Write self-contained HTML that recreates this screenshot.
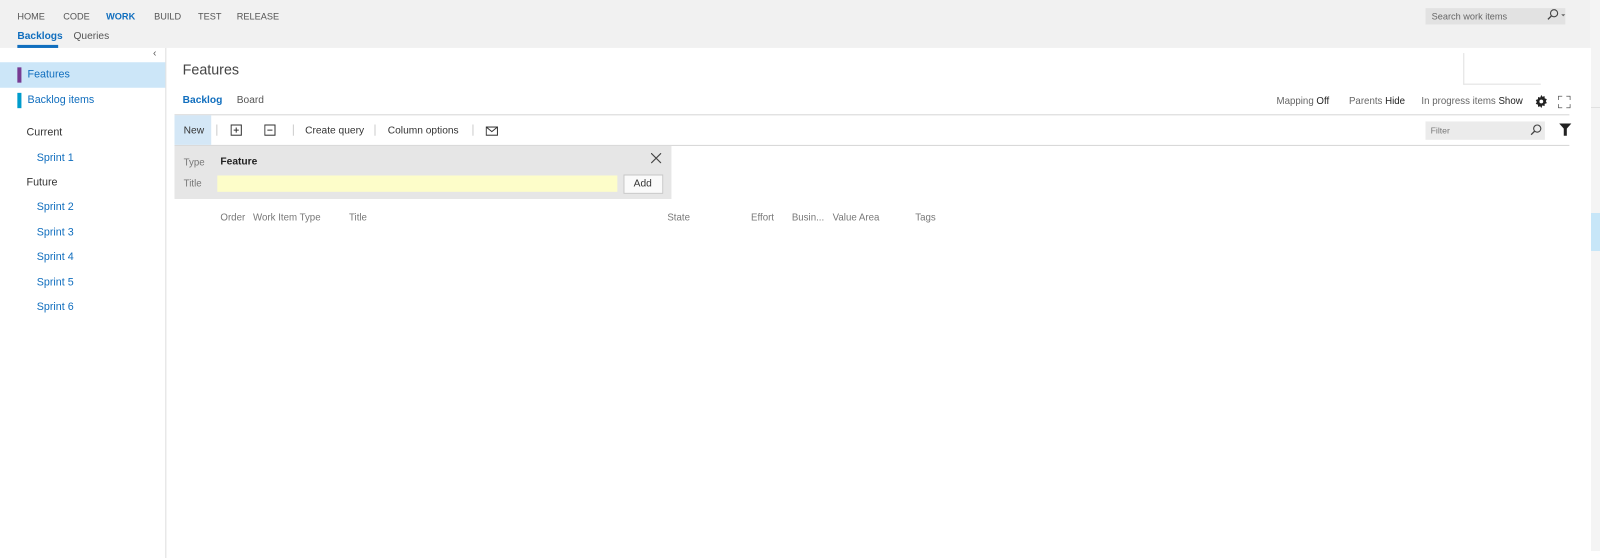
<!DOCTYPE html>
<html><head><meta charset="utf-8"><style>
*{margin:0;padding:0;box-sizing:border-box}
body{width:1600px;height:551px;overflow:hidden;background:#fff;font-family:"Liberation Sans",sans-serif;color:#333;position:relative}
#w{position:absolute;left:0;top:0;width:1568px;height:540px;transform:scale(1.0204);transform-origin:0 0}
.a{position:absolute;white-space:nowrap}
.nav{font-size:9px;color:#555;top:11px}
.blue{color:#106ebe}
.s{font-size:10.5px;color:#106ebe}
.g{color:#777;font-size:9.5px}
.t{font-size:10px;color:#333}
</style></head><body>
<div class="a" style="left:1591px;top:0;width:9px;height:551px;background:#f4f4f4"></div>
<div class="a" style="left:1591px;top:107px;width:9px;height:1px;background:#e0e0e0"></div>
<div class="a" style="left:1591px;top:213px;width:9px;height:38px;background:#c7e6f8"></div>
<div id="w">
<div class="a" style="left:0;top:0;width:1559px;height:47px;background:#f1f1f1"></div>
<div class="a nav" style="left:17px">HOME</div>
<div class="a nav" style="left:62px">CODE</div>
<div class="a nav blue" style="left:104px;font-weight:bold">WORK</div>
<div class="a nav" style="left:151px">BUILD</div>
<div class="a nav" style="left:194px">TEST</div>
<div class="a nav" style="left:232px">RELEASE</div>
<div class="a blue" style="left:17px;top:30px;font-size:10px;font-weight:bold">Backlogs</div>
<div class="a" style="left:17px;top:44px;width:40px;height:3px;background:#106ebe"></div>
<div class="a" style="left:72px;top:30px;font-size:10px;color:#555">Queries</div>
<div class="a" style="left:1397px;top:8px;width:137px;height:16px;background:#e2e2e2"></div>
<div class="a" style="left:1403px;top:11px;font-size:9px;color:#666">Search work items</div>
<svg class="a" style="left:1515px;top:8px" width="20" height="14"><circle cx="8" cy="5" r="3.5" fill="none" stroke="#444" stroke-width="1.1"/><line x1="5.5" y1="7.5" x2="2" y2="11" stroke="#444" stroke-width="1.3"/><path d="M15 6h4l-2 2z" fill="#666"/></svg>
<div class="a" style="left:162px;top:47px;width:1px;height:500px;background:#ddd"></div>
<div class="a" style="left:150px;top:47px;font-size:10px;color:#555">‹</div>
<div class="a" style="left:0;top:61px;width:162px;height:25px;background:#cce6f8"></div>
<div class="a" style="left:17px;top:66px;width:4px;height:15px;background:#773b93"></div>
<div class="a s" style="left:27px;top:67px">Features</div>
<div class="a" style="left:17px;top:91px;width:4px;height:15px;background:#009ccc"></div>
<div class="a s" style="left:27px;top:92px">Backlog items</div>
<div class="a" style="left:26px;top:124px;font-size:10.5px;color:#333">Current</div>
<div class="a s" style="left:36px;top:149px">Sprint 1</div>
<div class="a" style="left:26px;top:173px;font-size:10.5px;color:#333">Future</div>
<div class="a s" style="left:36px;top:197px">Sprint 2</div>
<div class="a s" style="left:36px;top:222px">Sprint 3</div>
<div class="a s" style="left:36px;top:246px">Sprint 4</div>
<div class="a s" style="left:36px;top:271px">Sprint 5</div>
<div class="a s" style="left:36px;top:295px">Sprint 6</div>
<div class="a" style="left:179px;top:60px;font-size:14px;color:#444">Features</div>
<div class="a" style="left:1434px;top:52px;width:1px;height:31px;background:#e0e0e0"></div>
<div class="a" style="left:1434px;top:82px;width:76px;height:1px;background:#e0e0e0"></div>
<div class="a blue" style="left:179px;top:93px;font-size:10px;font-weight:bold">Backlog</div>
<div class="a" style="left:232px;top:93px;font-size:10px;color:#555">Board</div>
<div class="a" style="left:1251px;top:94px;font-size:9.5px;color:#666">Mapping <span style="color:#222">Off</span></div>
<div class="a" style="left:1322px;top:94px;font-size:9.5px;color:#666">Parents <span style="color:#222">Hide</span></div>
<div class="a" style="left:1393px;top:94px;font-size:9.5px;color:#666">In progress items <span style="color:#222">Show</span></div>
<svg class="a" style="left:1504px;top:93px" width="13" height="13" viewBox="0 0 16 16"><path d="M8 0l1.3 2.3 2.6-.8.2 2.7 2.6.9-1.3 2.4 1.3 2.4-2.6.9-.2 2.7-2.6-.8L8 16l-1.3-2.3-2.6.8-.2-2.7-2.6-.9L2.6 8.5 1.3 6.1l2.6-.9.2-2.7 2.6.8z" fill="#222"/><circle cx="8" cy="8" r="2.3" fill="#fff"/></svg>
<svg class="a" style="left:1527px;top:94px" width="12" height="12"><path d="M0 4V0h4M8 0h4v4M12 8v4H8M4 12H0V8" fill="none" stroke="#333" stroke-width="1.2"/></svg>
<div class="a" style="left:171px;top:112px;width:1367px;height:1px;background:#d6d6d6"></div>
<div class="a" style="left:171px;top:142px;width:1367px;height:1px;background:#d6d6d6"></div>
<div class="a" style="left:171px;top:113px;width:36px;height:29px;background:#d4e7f6"></div>
<div class="a t" style="left:180px;top:123px">New</div>
<div class="a" style="left:212px;top:122px;width:1px;height:11px;background:#ccc"></div>
<svg class="a" style="left:226px;top:122px" width="12" height="12"><rect x=".5" y=".5" width="10" height="10" fill="none" stroke="#333"/><path d="M3 5.5h5M5.5 3v5" stroke="#333"/></svg>
<svg class="a" style="left:259px;top:122px" width="12" height="12"><rect x=".5" y=".5" width="10" height="10" fill="none" stroke="#333"/><path d="M3 5.5h5" stroke="#333"/></svg>
<div class="a" style="left:287px;top:122px;width:1px;height:11px;background:#ccc"></div>
<div class="a t" style="left:299px;top:123px">Create query</div>
<div class="a" style="left:367px;top:122px;width:1px;height:11px;background:#ccc"></div>
<div class="a t" style="left:380px;top:123px">Column options</div>
<div class="a" style="left:463px;top:122px;width:1px;height:11px;background:#ccc"></div>
<svg class="a" style="left:476px;top:124px" width="13" height="10"><rect x=".5" y=".5" width="11" height="8" fill="none" stroke="#333"/><path d="M.5 .5l5.5 4.5 5.5-4.5" fill="none" stroke="#333"/></svg>
<div class="a" style="left:1397px;top:119px;width:117px;height:18px;background:#ebebeb"></div>
<div class="a" style="left:1402px;top:123px;font-size:8.5px;color:#777">Filter</div>
<svg class="a" style="left:1499px;top:121px" width="13" height="13"><circle cx="7.5" cy="5" r="3.5" fill="none" stroke="#444" stroke-width="1.1"/><line x1="5" y1="7.5" x2="1.5" y2="11" stroke="#444" stroke-width="1.3"/></svg>
<svg class="a" style="left:1528px;top:121px" width="12" height="13"><path d="M0 0h12L7.5 5v7h-3V5z" fill="#222"/></svg>
<div class="a" style="left:171px;top:143px;width:487px;height:52px;background:#e6e6e6"></div>
<div class="a g" style="left:180px;top:154px">Type</div>
<div class="a" style="left:216px;top:153px;font-size:10px;font-weight:bold;color:#222">Feature</div>
<svg class="a" style="left:638px;top:150px" width="10" height="10"><path d="M0 0l10 10M10 0L0 10" stroke="#444" stroke-width="1.1"/></svg>
<div class="a g" style="left:180px;top:175px">Title</div>
<div class="a" style="left:213px;top:172px;width:392px;height:16px;background:#fdfdc9"></div>
<div class="a" style="left:611px;top:171px;width:39px;height:19px;background:#fafafa;border:1px solid #c8c8c8"></div>
<div class="a t" style="left:621px;top:175px">Add</div>
<div class="a g" style="left:216px;top:208px">Order</div>
<div class="a g" style="left:248px;top:208px">Work Item Type</div>
<div class="a g" style="left:342px;top:208px">Title</div>
<div class="a g" style="left:654px;top:208px">State</div>
<div class="a g" style="left:736px;top:208px">Effort</div>
<div class="a g" style="left:776px;top:208px">Busin...</div>
<div class="a g" style="left:816px;top:208px">Value Area</div>
<div class="a g" style="left:897px;top:208px">Tags</div>
</div>
</body></html>
